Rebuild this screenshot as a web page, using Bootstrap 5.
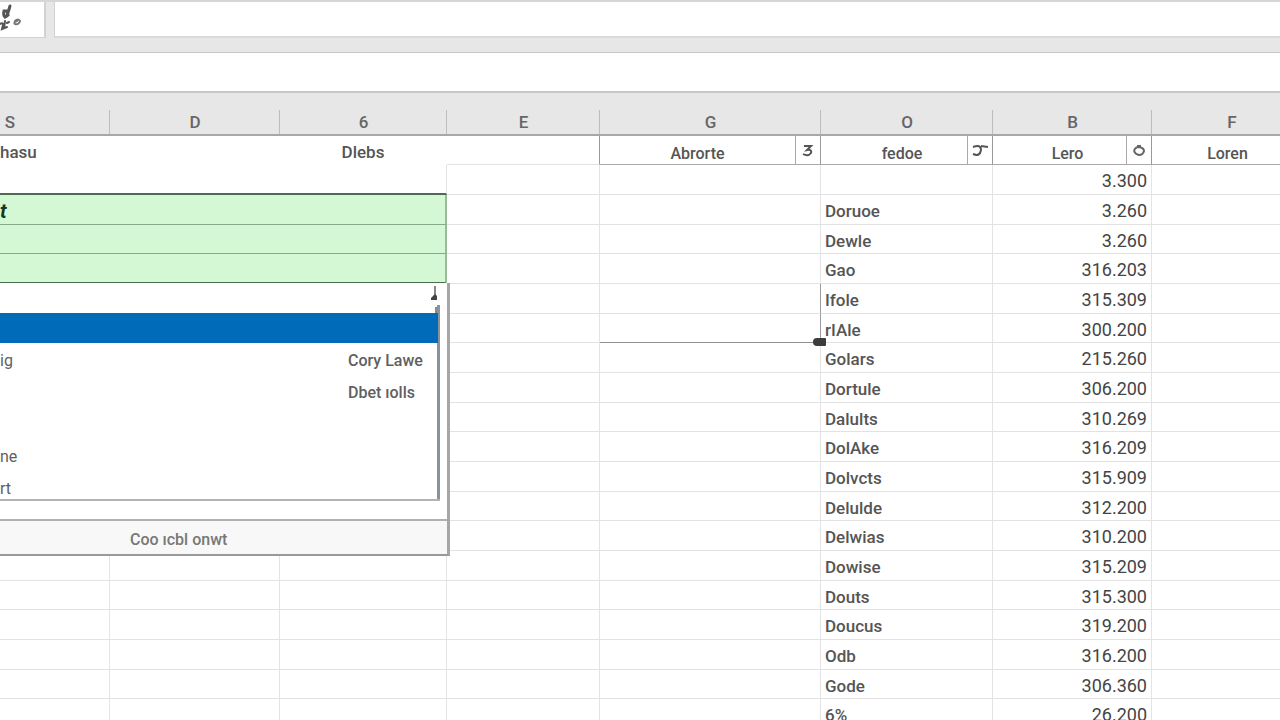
<!DOCTYPE html>
<html lang="en">
<head>
<meta charset="utf-8">
<meta name="viewport" content="width=device-width, initial-scale=1">
<title>Spreadsheet</title>
<link href="https://cdn.jsdelivr.net/npm/bootstrap@5.3.0/dist/css/bootstrap.min.css" rel="stylesheet">
<style>
body { font-family: Roboto, "Liberation Sans", sans-serif; font-size: 16px; line-height: 20px; color: #555; background: #fff; }
.top-strip { background: #e7e7e7; border-top: 2px solid #d6d6d6; height: 53px; padding-bottom: 14px; border-bottom: 1px solid #c6c6c6; gap: 8px; }
.fx-button { width: 46px; background: #fff; border-right: 2px solid #d2d2d2; border-bottom: 1px solid #d2d2d2; }
.formula-box { border: 0; border-left: 1px solid #d2d2d2; border-bottom: 2px solid #dadada; background: #fff; outline: 0; }
.ribbon-gap { height: 38px; background: #fff; }
.sheet { width: calc(100% + 32px); table-layout: fixed; border-collapse: separate; border-spacing: 0; }
.sheet th, .sheet td { padding: 0; font-weight: 400; white-space: nowrap; }
.sheet thead th { height: 45px; background: linear-gradient(#bdbdbd, #bdbdbd) right bottom / 1px 24px no-repeat #e7e7e7; border-top: 2px solid #c8c8c8; border-bottom: 2px solid #a8a8a8; padding-top: 16px; text-align: center; font-size: 17px; font-weight: 500; vertical-align: middle; color: #666; }
.sheet thead th.cut-column { padding-right: 90px; }
.sheet tbody tr { height: 30px; }
.sheet tbody tr:nth-child(3n+1) { height: 29px; }
.sheet tbody td { border-right: 1px solid #e4e4e4; border-bottom: 1px solid #e2e2e2; vertical-align: middle; font-size: 17px; font-weight: 500; padding-top: 3px; }
.sheet tbody td.open-cell { border-color: transparent; }
.sheet tbody td.field { border-right-color: #999; border-bottom-color: #aaa; text-align: center; font-size: 16px; padding: 0; }
.sheet td.field-edge { border-right-color: #999; }
.sheet td.entry { padding-left: 4px; }
.sheet tbody td.amount { padding-right: 4px; text-align: right; font-size: 18px; font-weight: 400; color: #444; }
.sheet tbody td.green { background: #d3f8d3; border-right: 2px solid #9bb89b; border-bottom: 1px solid #86a888; color: #17351b; font-size: 20px; font-weight: 700; font-style: italic; }
.sheet tbody td.before-green { border-bottom: 2px solid #4c6b50; }
.sheet tbody td.green-end { border-bottom: 2px solid #4c6b50; }
.sheet tbody td.range-side { border-right: 1px solid #999; }
.sheet tbody td.range-end { border-bottom: 1px solid #909090; position: relative; }
.range-handle { position: absolute; right: -6px; bottom: -4px; width: 13px; height: 8px; background: #3c3c3c; border-radius: 4px 1px 1px 4px; }
.filter-button { width: 25px; background: #fff; border: 0; border-left: 1px solid #aaa; padding: 0; }
.picker { position: absolute; top: 192px; left: 0; width: 450px; background: #fff; border-right: 3px solid #a6a6aa; border-bottom: 2px solid #999; }
.picker-list { width: 440px; height: 218px; border-bottom: 2px solid #b4b4b4; background: linear-gradient(#8b9298, #8b9298) right bottom / 3px 194px no-repeat; padding-right: 2px; }
.picker-search { height: 30px; }
.picker-search input { outline: 0; }
.picker-row { height: 32px; padding: 3px 15px 0 0; border: 0; background: transparent; color: #606060; text-align: left; font-size: 16px; flex-shrink: 0; }
.picker-row.current { height: 30px; background: #006bb9; }
.picker-row .hint { width: 75px; font-weight: 500; white-space: nowrap; }
.picker-foot { margin-top: 18px; height: 35px; border: 0; border-top: 2px solid #b0b0b0; background: #f8f8f8; color: #777; font-size: 16px; padding: 4px 0 0 130px; font-weight: 500; }
</style>
</head>
<body class="vh-100 overflow-hidden">
<header>
  <div class="top-strip d-flex">
    <button type="button" class="fx-button border-top-0 border-start-0 p-0 text-start" aria-label="Insert function">
      <svg width="26" height="34" viewBox="0 0 26 34" fill="none" stroke="#555" stroke-width="2" stroke-linecap="round" aria-hidden="true"><path d="M10 3L7 13M4 8Q3 12 5 14L8 12L7 8Z" stroke-width="3"/><path d="M0 21Q3 19 3 22L2 26L7 24M5 18L4 25M7 20L9 19"/><path d="M15 18Q18 15 20 18Q19 22 15 21Q13 19 17 18" stroke="#777"/></svg>
    </button>
    <input class="formula-box flex-grow-1" type="text" aria-label="Formula">
  </div>
  <div class="ribbon-gap"></div>
</header>
<main class="position-relative">
<table class="sheet">
  <colgroup><col style="width:110px"><col style="width:170px"><col style="width:167px"><col style="width:153px"><col style="width:221px"><col style="width:172px"><col style="width:159px"><col></colgroup>
  <thead><tr><th class="cut-column">S</th><th>D</th><th>6</th><th>E</th><th>G</th><th>O</th><th>B</th><th>F</th></tr></thead>
  <tbody>
    <tr><td class="open-cell">hasu</td><td class="open-cell"></td><td class="open-cell text-center">Dlebs</td><td class="field-edge"></td>
      <td class="field"><div class="d-flex h-100"><span class="flex-grow-1 pt-2">Abrorte</span><button type="button" class="filter-button" aria-label="Filter G"><svg width="14" height="14" viewBox="0 0 14 14" fill="none" stroke="#555" stroke-width="2" aria-hidden="true"><path d="M3 2H10L6 6Q11 5 10 9Q7 13 2 10"/></svg></button></div></td>
      <td class="field"><div class="d-flex h-100"><span class="flex-grow-1 pt-2 ps-3">fedoe</span><button type="button" class="filter-button" aria-label="Filter O"><svg width="18" height="14" viewBox="0 0 18 14" fill="none" stroke="#555" stroke-width="2" aria-hidden="true"><path d="M2 3Q10 0 10 6Q9 13 2 10M10 2L17 3"/></svg></button></div></td>
      <td class="field"><div class="d-flex h-100"><span class="flex-grow-1 pt-2 ps-3">Lero</span><button type="button" class="filter-button" aria-label="Filter B"><svg width="14" height="14" viewBox="0 0 14 14" fill="none" stroke="#666" stroke-width="2" aria-hidden="true"><path d="M2 7Q3 3 7 3Q12 4 12 7Q11 11 7 11Q3 10 2 7M5 2H9"/></svg></button></div></td>
      <td class="field"><div class="h-100 pt-2 pe-2">Loren</div></td></tr>
    <tr><td colspan="3" class="before-green"></td><td></td><td></td><td></td><td class="amount">3.300</td><td></td></tr>
    <tr><td colspan="3" class="green">t</td><td></td><td></td><td class="entry">Doruoe</td><td class="amount">3.260</td><td></td></tr>
    <tr><td colspan="3" class="green"></td><td></td><td></td><td class="entry">Dewle</td><td class="amount">3.260</td><td></td></tr>
    <tr><td colspan="3" class="green green-end"></td><td></td><td></td><td class="entry">Gao</td><td class="amount">316.203</td><td></td></tr>
    <tr><td></td><td></td><td></td><td></td><td class="range-side"></td><td class="entry">Ifole</td><td class="amount">315.309</td><td></td></tr>
    <tr><td></td><td></td><td></td><td></td><td class="range-side range-end"><span class="range-handle"></span></td><td class="entry">rIAle</td><td class="amount">300.200</td><td></td></tr>
    <tr><td></td><td></td><td></td><td></td><td></td><td class="entry">Golars</td><td class="amount">215.260</td><td></td></tr>
    <tr><td></td><td></td><td></td><td></td><td></td><td class="entry">Dortule</td><td class="amount">306.200</td><td></td></tr>
    <tr><td></td><td></td><td></td><td></td><td></td><td class="entry">Dalults</td><td class="amount">310.269</td><td></td></tr>
    <tr><td></td><td></td><td></td><td></td><td></td><td class="entry">DolAke</td><td class="amount">316.209</td><td></td></tr>
    <tr><td></td><td></td><td></td><td></td><td></td><td class="entry">Dolvcts</td><td class="amount">315.909</td><td></td></tr>
    <tr><td></td><td></td><td></td><td></td><td></td><td class="entry">Delulde</td><td class="amount">312.200</td><td></td></tr>
    <tr><td></td><td></td><td></td><td></td><td></td><td class="entry">Delwias</td><td class="amount">310.200</td><td></td></tr>
    <tr><td></td><td></td><td></td><td></td><td></td><td class="entry">Dowise</td><td class="amount">315.209</td><td></td></tr>
    <tr><td></td><td></td><td></td><td></td><td></td><td class="entry">Douts</td><td class="amount">315.300</td><td></td></tr>
    <tr><td></td><td></td><td></td><td></td><td></td><td class="entry">Doucus</td><td class="amount">319.200</td><td></td></tr>
    <tr><td></td><td></td><td></td><td></td><td></td><td class="entry">Odb</td><td class="amount">316.200</td><td></td></tr>
    <tr><td></td><td></td><td></td><td></td><td></td><td class="entry">Gode</td><td class="amount">306.360</td><td></td></tr>
    <tr><td></td><td></td><td></td><td></td><td></td><td class="entry">6%</td><td class="amount">26.200</td><td></td></tr>
  </tbody>
</table>
<section class="picker" aria-label="Choices">
  <div class="picker-list d-flex flex-column">
    <div class="picker-search d-flex">
      <input type="text" class="flex-grow-1 border-0 bg-transparent" aria-label="Search">
      <svg width="10" height="31" viewBox="0 0 10 31" aria-hidden="true"><path d="M7 3V14M8 24V31" stroke="#888" stroke-width="2"/><path d="M3 15L7 11L9 13V17H3Z" fill="#444"/></svg>
    </div>
    <button type="button" class="picker-row current" aria-label="Selected item"></button>
    <button type="button" class="picker-row d-flex align-items-center justify-content-between"><span>ig</span><span class="hint">Cory Lawe</span></button>
    <button type="button" class="picker-row d-flex align-items-center justify-content-end"><span class="hint">Dbet ıolls</span></button>
    <button type="button" class="picker-row" aria-label="Empty item"></button>
    <button type="button" class="picker-row">ne</button>
    <button type="button" class="picker-row">rt</button>
  </div>
  <button type="button" class="picker-foot d-block w-100 text-start">Coo ıcbl onwt</button>
</section>
</main>
<script src="https://cdn.jsdelivr.net/npm/bootstrap@5.3.0/dist/js/bootstrap.bundle.min.js"></script>
</body>
</html>
